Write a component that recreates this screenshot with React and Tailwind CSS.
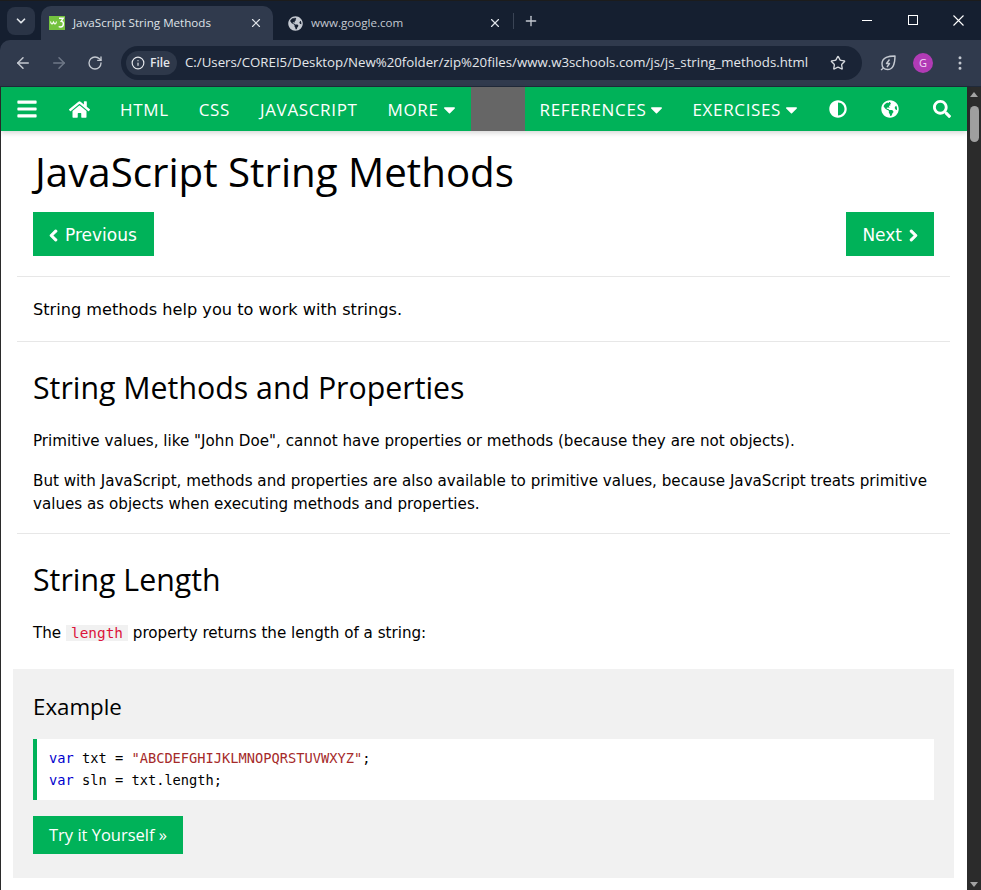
import React from 'react';
import { ArrowLeft, ArrowRight, RotateCw, Info, Star, X, Plus, ChevronDown, EllipsisVertical } from 'lucide-react';
import { FaBars, FaHome, FaCaretDown, FaAdjust, FaGlobeAmericas, FaSearch, FaChevronLeft, FaChevronRight } from 'react-icons/fa';

const segoe = "font-['Open_Sans',sans-serif]";
const verdana = "font-['DejaVu_Sans',sans-serif]";
const mono = "font-['DejaVu_Sans_Mono',monospace]";

const W3Logo = () => (
  <svg width="16" height="14" viewBox="0 0 16 14">
    <rect width="16" height="14" fill="#74c23f" />
    <path d="M1.500 5.500c.3 1.500.8 2.500 1.500 2.500s1-1.200 1.500-2c.5.800.8 2 1.500 2s1.200-1 1.500-2.500" fill="none" stroke="#fff" strokeWidth="1.200" />
    <path d="M10 2.200h4.200l-2 3.200c1.400 0 2.200 1 2.200 2.400 0 1.700-1.200 3.200-3 3.200-.7 0-1.300-.2-1.700-.5" fill="none" stroke="#fff" strokeWidth="1.400" />
  </svg>
);

const LeafBolt = () => (
  <svg width="18" height="18" viewBox="0 0 18 18" fill="none" stroke="#c4c9d1" strokeWidth="1.400" strokeLinejoin="round">
    <path d="M16 2c-6 0-13 1-13 8 0 1.500.5 3 1.500 4 1 1 2.500 1.500 4 1.500 6 0 7.500-7 7.500-13.500z" />
    <path d="M2 16l2.500-2" />
    <path d="M10.500 5.500L7.500 9.500h3l-2.500 3.500" />
  </svg>
);

const Tab = ({ active, icon, title, className }) => (
  <div className={`flex items-center h-[34px] pl-2 pr-[10px] rounded-t-[10px] ${className} ${active ? 'bg-[#303a4d] text-[#dfe3e8]' : 'text-[#c4c9d1]'}`}>
    <span className="w-4 flex justify-center shrink-0">{icon}</span>
    <span className="ml-2 flex-1 text-[11.600px] whitespace-nowrap font-['Open_Sans',sans-serif]">{title}</span>
    <X size={14} strokeWidth={2} color="#dfe3e8" />
  </div>
);

const NavLink = ({ children, caret }) => (
  <a className="flex items-center h-full px-[15px] pt-px text-white text-[17px] tracking-[0.65px] whitespace-nowrap shrink-0">
    {children}
    {caret && <FaCaretDown size={19} className="ml-[1px] -mr-[4px]" />}
  </a>
);

const NavIcon = ({ children, className }) => (
  <a className={`flex items-center justify-center h-full text-white shrink-0 ${className}`}>{children}</a>
);

const Divider = () => <hr className="mx-4 border-0 border-t border-[#e7e7e7]" />;

export default function App() {
  return (
    <div className="h-[890px] w-[981px] overflow-hidden flex flex-col bg-[#151f30]">
      {/* tab strip */}
      <div className="h-[40px] shrink-0 flex items-end border-t border-[#1c1c1c]">
        <div className="self-start mt-[6px] ml-[7px] w-[28px] h-[28px] rounded-lg bg-[#2a3446] flex items-center justify-center">
          <ChevronDown size={14} strokeWidth={3} color="#dfe3e8" />
        </div>
        <Tab active className="ml-[6px] w-[232px]" icon={<W3Logo />} title="JavaScript String Methods" />
        <Tab className="ml-[6px] w-[233px]" icon={<FaGlobeAmericas size={15} color="#c4c9d1" />} title="www.google.com" />
        <div className="self-center w-px h-[16px] bg-[#3a4455] ml-[1px]" />
        <Plus size={16} strokeWidth={2} color="#c4c9d1" className="self-center ml-[9px]" />
        <div className="flex-1" />
        <div className="self-start flex h-[38px] items-center">
          <div className="w-[46px] flex justify-center"><div className="w-[10px] h-px bg-white" /></div>
          <div className="w-[46px] flex justify-center"><div className="w-[10px] h-[10px] border border-white" /></div>
          <div className="w-[45px] flex justify-center">
            <svg width="11" height="11" viewBox="0 0 11 11" stroke="#fff" strokeWidth="1.100"><path d="M.5.500l10 10M10.500.500l-10 10" /></svg>
          </div>
        </div>
      </div>

      {/* toolbar */}
      <div className="h-[47px] shrink-0 flex items-center bg-[#303a4d] pl-[14px] rounded-tl-[10px] border-b border-[#202a3a]">
        <ArrowLeft size={18} color="#c4c9d1" />
        <ArrowRight size={18} color="#6f7888" className="ml-[18px]" />
        <RotateCw size={16} color="#c4c9d1" className="ml-[19px]" />
        <div className="ml-[18px] w-[741px] h-[34px] rounded-full bg-[#1a2436] flex items-center pl-[5px]">
          <div className="h-[24px] w-[51px] rounded-full bg-[#2e384a] flex items-center pl-[5px] text-[#e5e7eb]">
            <Info size={14} />
            <span className={`ml-[5px] text-[12px] font-semibold ${segoe}`}>File</span>
          </div>
          <span className={`ml-2 text-[13.250px] text-[#e4e7eb] whitespace-nowrap ${segoe}`}>C:/Users/COREI5/Desktop/New%20folder/zip%20files/www.w3schools.com/js/js_string_methods.html</span>
          <div className="flex-1" />
          <Star size={16} color="#d5d8dd" className="mr-[16px]" />
        </div>
        <div className="ml-[17px]"><LeafBolt /></div>
        <div className={`ml-[16px] w-[20px] h-[20px] rounded-full bg-[#b13bb5] flex items-center justify-center text-[11px] text-[#f3d9f4] ${segoe}`}>G</div>
        <EllipsisVertical size={18} color="#c4c9d1" className="ml-[18px]" />
      </div>

      {/* page + scrollbar */}
      <div className="flex-1 flex min-h-0">
        <div className="flex-1 min-w-0 flex flex-col pl-px bg-[#2b2b2b]">
          {/* w3 nav */}
          <nav className={`h-[44px] shrink-0 flex items-center bg-[#00b259] shadow-[0_2px_5px_rgba(0,0,0,0.16)] relative ${segoe}`}>
            <NavIcon className="w-[52px]"><FaBars size={22} /></NavIcon>
            <NavIcon className="w-[52px]"><FaHome size={21} /></NavIcon>
            <NavLink>HTML</NavLink>
            <NavLink>CSS</NavLink>
            <NavLink>JAVASCRIPT</NavLink>
            <NavLink caret>MORE</NavLink>
            <div className="ml-px w-[54px] h-full shrink-0 bg-[#666666]" />
            <NavLink caret>REFERENCES</NavLink>
            <NavLink caret>EXERCISES</NavLink>
            <div className="flex-1" />
            <NavIcon className="w-[52px]"><FaAdjust size={18} /></NavIcon>
            <NavIcon className="w-[52px]"><FaGlobeAmericas size={18} /></NavIcon>
            <NavIcon className="w-[52px]"><FaSearch size={18} /></NavIcon>
          </nav>

          <main className="flex-1 min-h-0 overflow-hidden bg-white text-black pr-px">
            <div className="px-8 pt-[9px]">
              <h1 className={`pl-[2px] text-[40.250px] leading-[63px] ${segoe}`}>JavaScript String Methods</h1>
              <div className="mt-[9px] flex justify-between">
                <a className={`h-[44px] pl-4 pr-[17px] pt-[3px] flex items-center gap-[7px] bg-[#00b259] text-white text-[17px] ${verdana}`}><FaChevronLeft size={13} stroke="currentColor" strokeWidth={40} className="-mx-[2px]" />Previous</a>
                <a className={`h-[44px] px-4 pt-[3px] flex items-center gap-[7px] bg-[#00b259] text-white text-[17px] ${verdana}`}>Next<FaChevronRight size={13} stroke="currentColor" strokeWidth={40} className="-mx-[2px]" /></a>
              </div>
            </div>
            <div className="mt-5"><Divider /></div>
            <p className={`px-8 mt-[21px] text-[16.170px] leading-[23px] ${verdana}`}>String methods help you to work with strings.</p>
            <div className="mt-[20px]"><Divider /></div>
            <h2 className={`px-8 mt-[23px] text-[30.300px] leading-[45px] ${segoe}`}>String Methods and Properties</h2>
            <p className={`px-8 mt-[20px] text-[15.150px] leading-[23px] ${verdana}`}>Primitive values, like "John Doe", cannot have properties or methods (because they are not objects).</p>
            <p className={`px-8 mt-[17px] text-[15.150px] leading-[23px] ${verdana}`}>But with JavaScript, methods and properties are also available to primitive values, because JavaScript treats primitive values as objects when executing methods and properties.</p>
            <div className="mt-[17px]"><Divider /></div>
            <h2 className={`px-8 mt-[23px] text-[30.300px] leading-[45px] ${segoe}`}>String Length</h2>
            <p className={`px-8 mt-[20px] text-[15.150px] leading-[23px] ${verdana}`}>
              The <code className={`bg-[#f1f1f1] text-[#dc143c] text-[14.400px] px-[5px] ${mono}`}>length</code> property returns the length of a string:
            </p>
            <section className="mx-3 mt-[24px] h-[209px] bg-[#f1f1f1] px-5 pt-[20px]">
              <h3 className={`text-[22.300px] leading-[36px] ${segoe}`}>Example</h3>
              <div className={`mt-[14px] h-[61px] bg-white border-l-4 border-[#00b259] pl-3 pt-[8px] text-[13.700px] leading-[22px] ${mono}`}>
                <div className="whitespace-nowrap"><span className="text-[#0000cd]">var</span> txt = <span className="text-[#a52a2a]">"ABCDEFGHIJKLMNOPQRSTUVWXYZ"</span>;</div>
                <div className="whitespace-nowrap"><span className="text-[#0000cd]">var</span> sln = txt.length;</div>
              </div>
              <a className={`mt-4 inline-flex items-center h-[38px] px-4 bg-[#00b259] text-white text-[16.500px] ${segoe}`}>Try it Yourself »</a>
            </section>
          </main>
        </div>

        {/* scrollbar */}
        <div className="w-[14px] shrink-0 bg-[#2b2b2b] flex flex-col items-center justify-between pb-[3px] pt-[5px]">
          <div className="flex flex-col items-center">
            <div className="w-0 h-0 border-x-[4px] border-x-transparent border-b-[5px] border-b-[#a3a3a3]" />
            <div className="mt-[9px] w-[9px] h-[36px] rounded-full bg-[#9f9f9f]" />
          </div>
          <div className="w-0 h-0 border-x-[4px] border-x-transparent border-t-[5px] border-t-[#a3a3a3]" />
        </div>
      </div>
    </div>
  );
}
